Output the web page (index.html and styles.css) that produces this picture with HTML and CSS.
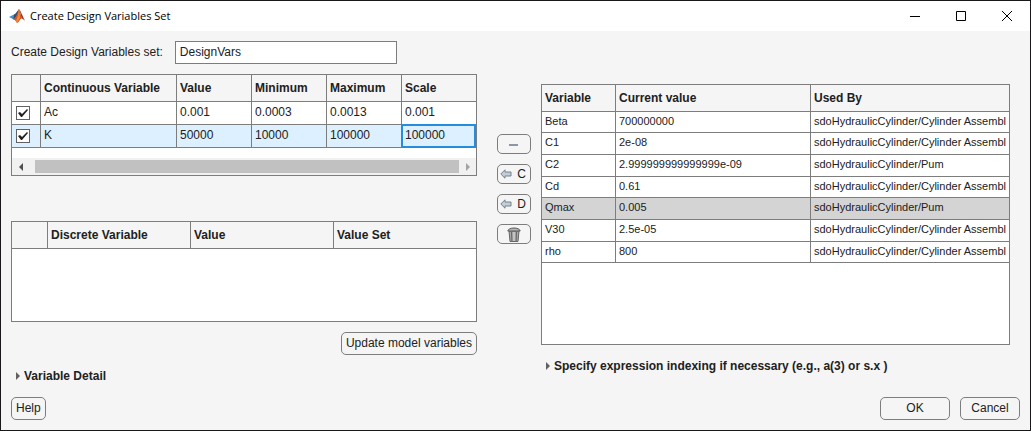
FILE: index.html
```html
<!DOCTYPE html>
<html lang="en">
<head>
<meta charset="utf-8">
<title>Create Design Variables Set</title>
<link rel="stylesheet" href="styles.css">
</head>
<body>
<div class="window">
  <header class="titlebar">
    <svg class="logo" viewBox="0 0 16 16" width="16" height="16" aria-hidden="true">
      <path d="M0 9 5 6.500 7.500 9 4.500 11.500z" fill="#4a8fc4"/>
      <path d="M5 6.500C7 6 8 3 10 1L8.500 8 6 11.500 4.500 11.500z" fill="#2a4f78"/>
      <path d="M10 .8C8.500 5 7.500 9 4.500 11.500 6.500 11.500 7 14 8 15c2-.5 3-4 4.500-4.500C12 7 11 3 10 .8z" fill="#d4572a"/>
      <path d="M10 .8C9.500 5 9 9 7 12.500l1 2.500c1.500-2 2-4 3-5z" fill="#f08a35"/>
      <path d="M10 .8c1.500 2 3.500 7 6 12-1.500-1.500-2.500-2.500-3.500-2.300C12 7 11 3 10 .8z" fill="#a5301c"/>
    </svg>
    <h1 class="title">Create Design Variables Set</h1>
    <div class="window-controls">
      <button type="button" aria-label="Minimize"><svg width="10" height="10" viewBox="0 0 10 10"><path d="M0 5.500h10"/></svg></button>
      <button type="button" aria-label="Maximize"><svg width="10" height="10" viewBox="0 0 10 10"><path d="M.5.5h9v9h-9z"/></svg></button>
      <button type="button" aria-label="Close"><svg width="10" height="10" viewBox="0 0 10 10"><path d="M0 0l10 10M10 0L0 10"/></svg></button>
    </div>
  </header>

  <main class="content">
    <section class="left">
      <div class="name-row">
        <label for="set-name">Create Design Variables set:</label>
        <input id="set-name" type="text" value="DesignVars">
      </div>

      <div class="grid-box continuous">
        <table>
          <colgroup><col class="c-check"><col class="c-name"><col class="c-num"><col class="c-num"><col class="c-num"><col class="c-last"></colgroup>
          <thead>
            <tr><th></th><th>Continuous Variable</th><th>Value</th><th>Minimum</th><th>Maximum</th><th>Scale</th></tr>
          </thead>
          <tbody>
            <tr><td class="check"><input type="checkbox" checked aria-label="Ac"></td><td>Ac</td><td>0.001</td><td>0.0003</td><td>0.0013</td><td>0.001</td></tr>
            <tr class="selected"><td class="check"><input type="checkbox" checked aria-label="K"></td><td>K</td><td>50000</td><td>10000</td><td>100000</td><td class="focused">100000</td></tr>
          </tbody>
        </table>
        <div class="scrollbar">
          <button type="button" class="scroll-left" aria-label="Scroll left"><svg width="4" height="8" viewBox="0 0 4 8"><path d="M4 0v8L0 4z" fill="#505050"/></svg></button>
          <div class="thumb"></div>
          <button type="button" class="scroll-right" aria-label="Scroll right"><svg width="4" height="8" viewBox="0 0 4 8"><path d="M0 0v8l4-4z" fill="#a3a3a3"/></svg></button>
        </div>
      </div>

      <div class="grid-box discrete">
        <table>
          <colgroup><col class="d-check"><col class="d-col"><col class="d-col"><col class="d-last"></colgroup>
          <thead>
            <tr><th></th><th>Discrete Variable</th><th>Value</th><th>Value Set</th></tr>
          </thead>
        </table>
      </div>

      <button type="button" class="btn update">Update model variables</button>

      <details>
        <summary>Variable Detail</summary>
      </details>
    </section>

    <div class="transfer">
      <button type="button" class="btn small" aria-label="Remove"><svg width="10" height="4" viewBox="0 0 10 4"><path d="M0 1h9v2H0z" fill="#8a97a6"/></svg></button>
      <button type="button" class="btn small arrow"><svg width="12" height="10" viewBox="0 0 12 10"><path d="M.8 5 5 .8V3h6v4H5v2.200z" fill="#c3cdd6" stroke="#75818d"/></svg><span>C</span></button>
      <button type="button" class="btn small arrow"><svg width="12" height="10" viewBox="0 0 12 10"><path d="M.8 5 5 .8V3h6v4H5v2.200z" fill="#c3cdd6" stroke="#75818d"/></svg><span>D</span></button>
      <button type="button" class="btn small" aria-label="Delete"><svg width="14" height="15" viewBox="0 0 14 15">
        <path d="M2 4h10l-1 10.500H3z" fill="#a8a8a8" stroke="#666"/>
        <path d="M4.500 5l.4 9M9.500 5l-.4 9" stroke="#666"/>
        <path d="M7 5v9" stroke="#e0e0e0"/>
        <path d="M.8 4C1 2 4 1 7 1s6 1 6.200 3z" fill="#b5b5b5" stroke="#5a5a5a"/>
      </svg></button>
    </div>

    <section class="right">
      <div class="grid-box variables">
        <table>
          <colgroup><col class="v-name"><col class="v-value"><col class="v-used"></colgroup>
          <thead>
            <tr><th>Variable</th><th>Current value</th><th>Used By</th></tr>
          </thead>
          <tbody>
            <tr><td>Beta</td><td>700000000</td><td>sdoHydraulicCylinder/Cylinder Assembl</td></tr>
            <tr><td>C1</td><td>2e-08</td><td>sdoHydraulicCylinder/Cylinder Assembl</td></tr>
            <tr><td>C2</td><td>2.999999999999999e-09</td><td>sdoHydraulicCylinder/Pum</td></tr>
            <tr><td>Cd</td><td>0.61</td><td>sdoHydraulicCylinder/Cylinder Assembl</td></tr>
            <tr class="current"><td>Qmax</td><td>0.005</td><td>sdoHydraulicCylinder/Pum</td></tr>
            <tr><td>V30</td><td>2.5e-05</td><td>sdoHydraulicCylinder/Cylinder Assembl</td></tr>
            <tr><td>rho</td><td>800</td><td>sdoHydraulicCylinder/Cylinder Assembl</td></tr>
          </tbody>
        </table>
      </div>
      <details>
        <summary>Specify expression indexing if necessary (e.g., a(3) or s.x )</summary>
      </details>
    </section>
  </main>

  <footer class="footer">
    <button type="button" class="btn help">Help</button>
    <button type="button" class="btn ok">OK</button>
    <button type="button" class="btn cancel">Cancel</button>
  </footer>
</div>
</body>
</html>
```
FILE: styles.css
```css
* { box-sizing: border-box; }

body {
  margin: 0;
  font: 12px/16px "Liberation Sans", Arial, sans-serif;
  color: #212121;
}

button, input { font: inherit; color: inherit; }

.window {
  display: flex;
  flex-direction: column;
  min-height: 100vh;
  border: 1px solid #1a171b;
  background: #f5f5f5;
}

.titlebar {
  display: flex;
  align-items: center;
  gap: 5px;
  height: 30px;
  padding-left: 8px;
  background: #fff;
  color: #000;
}
.logo { display: block; }
.title {
  flex: 1;
  margin: 0;
  font: 11px/16px "Open Sans", "Noto Sans", sans-serif;
}
.window-controls { display: flex; }
.window-controls button {
  display: flex;
  align-items: center;
  justify-content: center;
  width: 46px;
  height: 30px;
  padding: 0;
  border: 0;
  background: none;
}
.window-controls path { fill: none; stroke: #000; }

.content {
  display: grid;
  grid-template-columns: 486fr 34px 479fr;
  flex: 1;
  padding: 10px 20px 0 10px;
}

.left, .right { display: flex; flex-direction: column; min-width: 0; }
.left { padding-right: 20px; }
.right { padding: 43px 0 0 10px; }

.name-row { display: flex; align-items: center; gap: 12px; margin-bottom: 10px; }
.name-row label { padding-bottom: 2px; }
.name-row input {
  width: 222px;
  height: 23px;
  padding: 0 4px 2px;
  border: 1px solid #7d7d7d;
  background: #fff;
}

.grid-box {
  display: flex;
  flex-direction: column;
  border: 1px solid #7d7d7d;
  background: #fff;
}
table {
  width: 100%;
  table-layout: fixed;
  border-collapse: separate;
  border-spacing: 0;
}
th, td {
  height: 23px;
  padding: 0 3px;
  border-right: 1px solid #7d7d7d;
  border-bottom: 1px solid #7d7d7d;
  text-align: left;
  white-space: nowrap;
  overflow: hidden;
}
th { height: 27px; background: #f5f5f5; font-weight: bold; }
th:last-child, td:last-child { border-right: 0; }

.continuous { height: 102px; margin-bottom: 45px; }
.c-check { width: 29px; }
.c-name { width: 136px; }
.c-num { width: 75px; }
.c-last { width: 74px; }
.continuous td { padding-bottom: 3px; }
.continuous td.check { padding: 0 4px; }
.check input {
  appearance: none;
  display: block;
  width: 14px;
  height: 14px;
  margin: 0;
  border: 1px solid #616161;
  background: #fff;
}
.check input:checked::before {
  content: "";
  display: block;
  width: 12px;
  height: 12px;
  background: #212121;
  clip-path: polygon(1px 6px, 3px 5px, 5px 7px, 10px 2px, 11px 3px, 5px 10px, 4px 10px);
}
.selected td { background: #dcf0ff; }
td.focused { position: relative; overflow: visible; }
td.focused::after {
  content: "";
  position: absolute;
  inset: -1px 0 -1px -1px;
  border: 2px solid #268cdd;
}

.scrollbar {
  display: flex;
  align-items: center;
  height: 17px;
  margin-top: auto;
  background: #f1f1f1;
}
.scrollbar button {
  display: flex;
  align-items: center;
  justify-content: center;
  height: 17px;
  padding: 0;
  border: 0;
  background: none;
}
.scrollbar .scroll-left { width: 23px; padding-right: 6px; }
.scrollbar .scroll-right { width: 17px; }
.thumb { flex: 1; height: 13px; background: #c1c1c1; }

.discrete { height: 101px; margin-bottom: 10px; }
.d-check { width: 36px; }
.d-col { width: 143px; }
.d-last { width: 142px; }

.variables { height: 261px; margin-bottom: 13px; }
.v-name { width: 74px; }
.v-value { width: 195px; }
.v-used { width: 198px; }
.variables td { height: 22px; padding-bottom: 3px; font-size: 11px; }
.variables tbody tr:nth-child(3n + 1) td { height: 21px; }
.current td { background: #d4d4d4; }

.btn {
  display: flex;
  align-items: center;
  justify-content: center;
  height: 23px;
  padding: 0 4px 2px;
  border: 1px solid #7d7d7d;
  border-radius: 5px;
  background: #f5f5f5;
  white-space: nowrap;
}
.update { align-self: flex-end; margin-bottom: 13px; }

summary {
  display: flex;
  align-items: center;
  gap: 4px;
  padding-left: 5px;
  font-weight: bold;
  list-style: none;
}
summary::before {
  content: "";
  width: 4px;
  height: 8px;
  background: #616161;
  clip-path: polygon(0 0, 100% 50%, 0 100%);
}

.transfer {
  display: flex;
  flex-direction: column;
  gap: 10px;
  padding-top: 93px;
}
.btn.small { height: 20px; padding: 1px 4px 0; }
.btn.arrow { justify-content: space-between; padding: 0 4px 0 2px; }

.footer {
  display: flex;
  gap: 10px;
  padding: 13px 10px 10px;
}
.help { margin-right: auto; }
.ok { width: 70px; }
.cancel { width: 60px; }
```
